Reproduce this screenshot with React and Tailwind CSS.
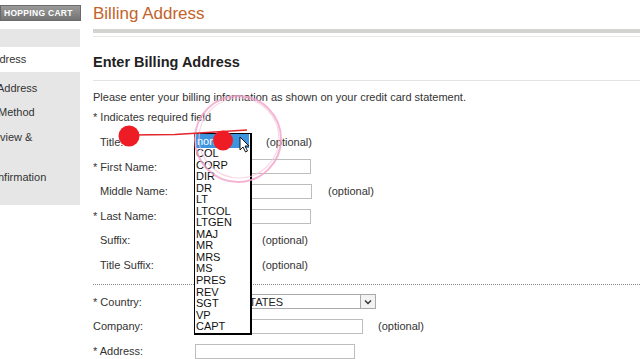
import React from "react";

const font = "font-['Liberation_Sans',Arial,sans-serif]";

function Input({ w }) {
  return <div className="h-[15px] border border-[#bdbdbd] bg-white shrink-0" style={{ width: w }} />;
}

function Row({ label, req, noIndent, children }) {
  return (
    <div className="h-[24.6px] flex items-center">
      <div className={`w-[102px] shrink-0 text-[11px] text-[#333] ${req || noIndent ? "" : "pl-[7px]"}`}>
        {req ? "* " : ""}
        {label}
      </div>
      {children}
    </div>
  );
}

const items = ["COL", "CORP", "DIR", "DR", "LT", "LTCOL", "LTGEN", "MAJ", "MR", "MRS", "MS", "PRES", "REV", "SGT", "VP", "CAPT"];

export default function App() {
  return (
    <div className={`relative w-[640px] h-[359px] overflow-hidden bg-white flex ${font}`}>
      {/* Sidebar */}
      <div className="w-[81px] shrink-0 pt-[5px]">
        <div className="h-[16px] bg-gradient-to-b from-[#9a9a9a] to-[#747474] border border-[#6a6a6a] flex items-center pl-[3px] overflow-hidden">
          <span className="text-white font-bold text-[8.5px] tracking-[0.3px] whitespace-nowrap">HOPPING CART</span>
        </div>
        <div className="mt-[8px] h-[176px] w-[80px] bg-[#e6e6e6] pt-[18px] text-[11px] text-[#333] overflow-hidden">
          <div className="h-[25px] bg-white flex items-center whitespace-nowrap">
            <span className="ml-[-3px]">ldress</span>
          </div>
          <div className="mt-[4px] h-[24px] leading-[24px] whitespace-nowrap ml-[-3px]">Address</div>
          <div className="h-[25px] leading-[25px] whitespace-nowrap ml-[-2px]">Method</div>
          <div className="h-[24px] leading-[24px] whitespace-nowrap">view &amp;</div>
          <div className="mt-[16px] h-[24px] leading-[24px] whitespace-nowrap ml-[-2px]">nfirmation</div>
        </div>
      </div>

      {/* Main */}
      <div className="flex-1 pl-[12px]">
        <div className="h-[28px] leading-[28px] text-[17px] text-[#c3632c]">Billing Address</div>
        <div className="mt-[1px] h-[4px] bg-[#d3d3cf]" />
        <div className="mt-[3px] h-px bg-[#e8e8e6]" />
        <div className="mt-[15px] h-[20px] leading-[20px] text-[14.5px] font-bold text-[#222]">Enter Billing Address</div>
        <div className="mt-[8px] h-px bg-[#e3e3e3]" />
        <div className="mt-[8px] h-[16px] leading-[16px] text-[11px] text-[#333] whitespace-nowrap">
          Please enter your billing information as shown on your credit card statement.
        </div>
        <div className="mt-[4px] h-[16px] leading-[16px] text-[11px] text-[#333]">* Indicates required field</div>

        <div className="mt-[5px]">
          <Row label="Title:">
            <Input w={56} />
            <span className="ml-[15px] text-[11px] text-[#333]">(optional)</span>
          </Row>
          <Row label="First Name:" req>
            <Input w={116} />
          </Row>
          <Row label="Middle Name:">
            <Input w={117} />
            <span className="ml-[16px] text-[11px] text-[#333]">(optional)</span>
          </Row>
          <Row label="Last Name:" req>
            <Input w={116} />
          </Row>
          <Row label="Suffix:">
            <div className="w-[55px] shrink-0" />
            <span className="ml-[12px] text-[11px] text-[#333]">(optional)</span>
          </Row>
          <Row label="Title Suffix:">
            <div className="w-[55px] shrink-0" />
            <span className="ml-[12px] text-[11px] text-[#333]">(optional)</span>
          </Row>
        </div>

        <div className="mt-[6px] border-t border-dotted border-[#8a8a8a]" />

        <div className="mt-[5px]">
          <Row label="Country:" req>
            <div className="w-[181px] h-[15px] shrink-0 border border-[#a9a9a9] bg-white flex items-center">
              <span className="flex-1 pl-[2px] text-[11px] text-[#222] whitespace-nowrap overflow-hidden">UNITED STATES</span>
              <div className="w-[15px] h-[13px] border-l border-[#a9a9a9] bg-[#f2f2f2] flex items-center justify-center">
                <svg width="8" height="6" viewBox="0 0 8 6">
                  <path d="M1 1.5 L4 4.5 L7 1.5" fill="none" stroke="#333" strokeWidth="1.4" />
                </svg>
              </div>
            </div>
          </Row>
          <Row label="Company:" noIndent>
            <Input w={168} />
            <span className="ml-[15px] text-[11px] text-[#333]">(optional)</span>
          </Row>
          <Row label="Address:" req>
            <Input w={160} />
          </Row>
        </div>
      </div>

      {/* Open dropdown list */}
      <div className="absolute left-[194px] top-[133px] w-[58px] bg-white border-l border-t border-r-2 border-b-2 border-black">
        <div className="h-[14px] mx-[1px] bg-[#3d95e0] text-white text-[11px] leading-[14px] pl-[1px]">none</div>
        {items.map((it) => (
          <div key={it} className="h-[11.56px] leading-[11.56px] text-[11px] text-[#111] pl-[1px]">
            {it}
          </div>
        ))}
      </div>

      {/* Annotation overlay */}
      <svg className="absolute left-0 top-0 pointer-events-none" width="640" height="359" viewBox="0 0 640 359">
        <circle cx="238" cy="139" r="43" fill="none" stroke="#f0a3c8" strokeWidth="2" opacity="0.8" />
        <circle cx="239" cy="138" r="40" fill="none" stroke="#f6c6dc" strokeWidth="1.2" opacity="0.7" />
        <path d="M130 135 L175 134.5 L247 130" fill="none" stroke="#e3252c" strokeWidth="1.5" />
        <circle cx="129" cy="136" r="10.5" fill="#ee1d25" />
        <circle cx="223" cy="140.5" r="10" fill="#ee1d25" />
        <path
          d="M240 137 L240 150 L243 147 L245.5 152 L247.5 151 L245 146 L249 146 Z"
          fill="#fff"
          stroke="#000"
          strokeWidth="0.9"
          strokeLinejoin="round"
        />
      </svg>
    </div>
  );
}
